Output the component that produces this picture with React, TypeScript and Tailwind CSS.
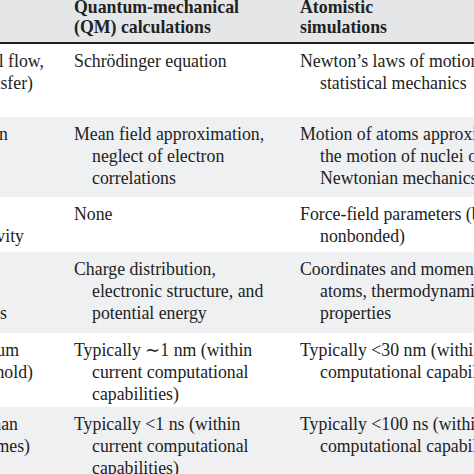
import React from 'react';

type Row = {
  bg: string;
  height: string;
  // visible tail of the clipped first column: [text, right edge in px]
  left: [string, string][];
  qm: string[];
  atom: string[];
};

// the first column is cut off by the crop, only the line ends show
const rows: Row[] = [
  {
    bg: 'bg-white',
    height: 'h-[73px]',
    left: [['thermal flow,', 'w-[44px]'], ['heat transfer)', 'w-[33px]']],
    qm: ['Schrödinger equation'],
    atom: ['Newton’s laws of motion,', 'statistical mechanics'],
  },
  {
    bg: 'bg-[#eef0f2]',
    height: 'h-[80px]',
    left: [['equation', 'w-[8px]']],
    qm: ['Mean field approximation,', 'neglect of electron', 'correlations'],
    atom: ['Motion of atoms approximated by', 'the motion of nuclei of', 'Newtonian mechanics'],
  },
  {
    bg: 'bg-white',
    height: 'h-[55px]',
    left: [['', 'w-[1px]'], ['conductivity', 'w-[24px]']],
    qm: ['None'],
    atom: ['Force-field parameters (bonded,', 'nonbonded)'],
  },
  {
    bg: 'bg-[#eef0f2]',
    height: 'h-[81px]',
    left: [['', 'w-[1px]'], ['', 'w-[1px]'], ['properties', 'w-[7px]']],
    qm: ['Charge distribution,', 'electronic structure, and', 'potential energy'],
    atom: ['Coordinates and momenta of', 'atoms, thermodynamic', 'properties'],
  },
  {
    bg: 'bg-white',
    height: 'h-[74px]',
    left: [['continuum', 'w-[19px]'], ['threshold)', 'w-[33px]']],
    qm: ['Typically ∼1 nm (within', 'current computational', 'capabilities)'],
    atom: ['Typically <30 nm (within current', 'computational capabilities)'],
  },
  {
    bg: 'bg-[#eef0f2]',
    height: 'h-[80px]',
    left: [['than', 'w-[18px]'], ['times)', 'w-[30px]']],
    qm: ['Typically <1 ns (within', 'current computational', 'capabilities)'],
    atom: ['Typically <100 ns (within current', 'computational capabilities)'],
  },
];

const Lines: React.FC<{ lines: string[]; indent: string }> = ({ lines, indent }) => (
  <div className="flex flex-col">
    {lines.map((l, i) => (
      <div key={i} className={`h-[22px] whitespace-nowrap ${i > 0 ? indent : ''}`}>
        {l}
      </div>
    ))}
  </div>
);

export default function App() {
  return (
    <div
      className="w-[474px] h-[474px] overflow-hidden bg-white text-[#222] text-[17.8px] leading-[22px]"
      style={{ fontFamily: '"Liberation Serif", "Times New Roman", serif' }}
    >
      {/* header */}
      <div className="flex h-[42px] bg-[#e4e6e8] font-bold leading-[20px]">
        <div className="w-[74px] shrink-0" />
        <div className="w-[226px] shrink-0 -mt-[3px]">
          <div className="whitespace-nowrap">Quantum-mechanical</div>
          <div className="whitespace-nowrap">(QM) calculations</div>
        </div>
        <div className="flex-1 -mt-[3px] whitespace-nowrap">
          <div>Atomistic</div>
          <div>simulations</div>
        </div>
      </div>
      <div className="h-[2px] bg-[#1e1e1e]" />

      {rows.map((r, i) => (
        <div key={i} className={`flex ${r.bg} ${r.height} pt-[6px]`}>
          <div className="w-[74px] shrink-0 flex flex-col">
            {r.left.map(([t, w], j) => (
              <div key={j} className={`${w} h-[22px] overflow-hidden whitespace-nowrap flex justify-end`}>
                <span className="shrink-0">{t}</span>
              </div>
            ))}
          </div>
          <div className="w-[226px] shrink-0">
            <Lines lines={r.qm} indent="pl-[18px]" />
          </div>
          <div className="flex-1 overflow-hidden">
            <Lines lines={r.atom} indent="pl-[20px]" />
          </div>
        </div>
      ))}
    </div>
  );
}
